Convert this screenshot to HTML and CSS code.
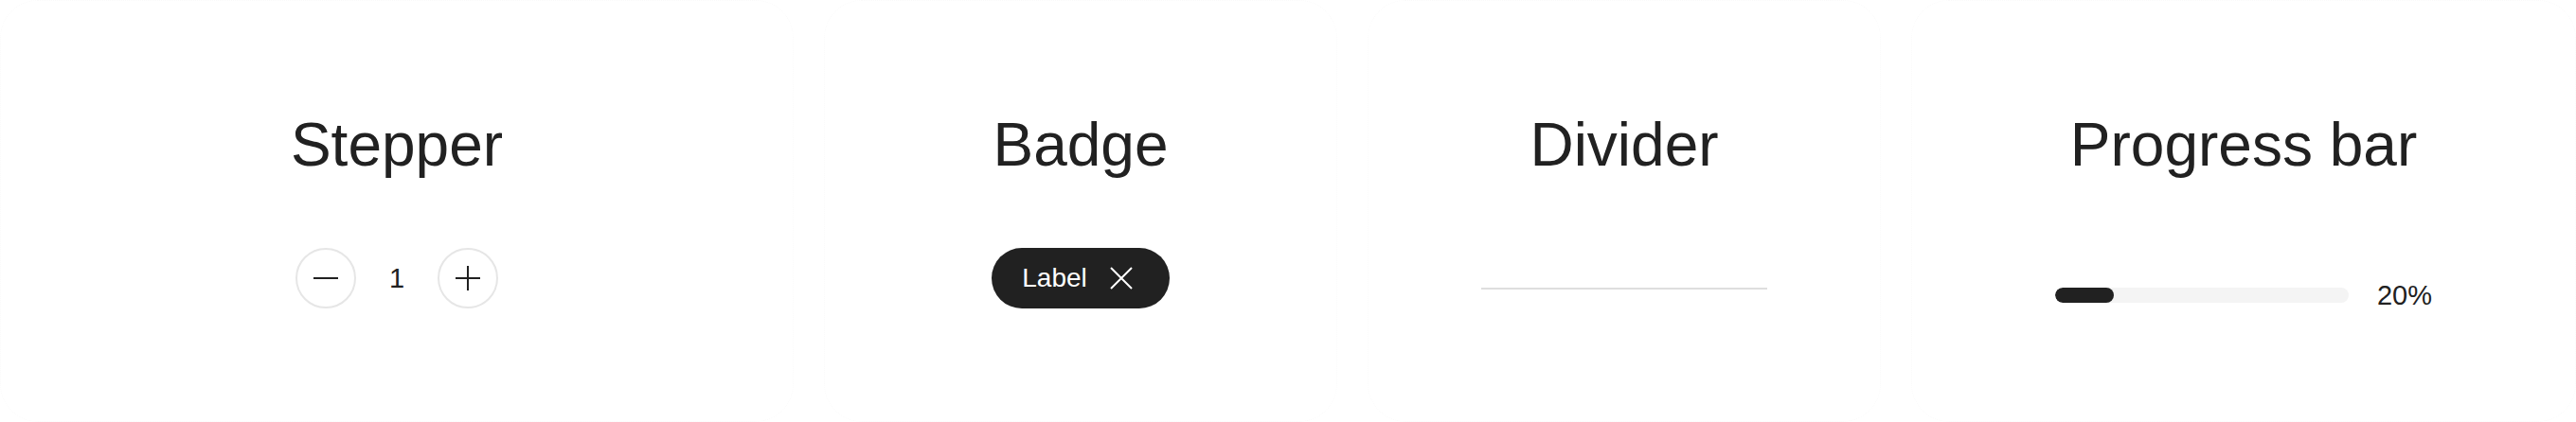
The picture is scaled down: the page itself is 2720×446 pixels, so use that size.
FILE: index.html
```html
<!DOCTYPE html>
<html lang="en">
<head>
    <meta charset="UTF-8">
    <meta name="viewport" content="width=device-width, initial-scale=1.0">
    <title>Components</title>
    <link rel="stylesheet" href="styles.css">
</head>
<body>
    <main class="board">
        <section class="card card-stepper">
            <h2 class="card-title">Stepper</h2>
            <div class="stepper">
                <button class="stepper-btn" aria-label="Decrease">
                    <svg width="28" height="28" viewBox="0 0 28 28"><path d="M1 14h26" /></svg>
                </button>
                <span class="stepper-value">1</span>
                <button class="stepper-btn" aria-label="Increase">
                    <svg width="28" height="28" viewBox="0 0 28 28"><path d="M14 1v26M1 14h26" /></svg>
                </button>
            </div>
        </section>
        <section class="card card-badge">
            <h2 class="card-title">Badge</h2>
            <span class="badge">
                <span class="badge-label">Label</span>
                <svg class="badge-close" width="24" height="24" viewBox="0 0 24 24"><path d="M1 1L23 23M23 1L1 23" /></svg>
            </span>
        </section>
        <section class="card card-divider">
            <h2 class="card-title">Divider</h2>
            <hr class="divider">
        </section>
        <section class="card card-progress">
            <h2 class="card-title">Progress bar</h2>
            <div class="progress">
                <div class="progress-track">
                    <div class="progress-fill" style="width: 20%"></div>
                </div>
                <span class="progress-value">20%</span>
            </div>
        </section>
    </main>
</body>
</html>
```
FILE: styles.css
```css
body {
    font-family: "Liberation Sans", Arial, sans-serif;
    margin: 0;
    padding: 0;
    background-color: #ffffff;
    color: #212121;
}
.board {
    display: flex;
    gap: 32px;
    height: 446px;
}
.card {
    box-sizing: border-box;
    height: 446px;
    padding-top: 120px;
    display: flex;
    flex-direction: column;
    align-items: center;
    border: 1px dotted #fafafa;
    border-radius: 40px;
}
.card-stepper {
    width: 838px;
}
.card-badge, .card-divider {
    width: 542px;
}
.card-progress {
    flex: 1;
}
.card-title {
    margin: 0;
    font-size: 64px;
    font-weight: normal;
    line-height: 64px;
}

/* stepper */
.stepper {
    display: flex;
    align-items: center;
    gap: 24px;
    margin-top: 77px;
}
.stepper-btn {
    box-sizing: border-box;
    width: 64px;
    height: 64px;
    padding: 0;
    display: flex;
    align-items: center;
    justify-content: center;
    background-color: #ffffff;
    border: 2px solid #e6e6e6;
    border-radius: 50%;
}
.stepper-btn svg path {
    stroke: #212121;
    stroke-width: 2;
    fill: none;
}
.stepper-value {
    min-width: 38px;
    text-align: center;
    font-size: 29px;
    line-height: 32px;
}

/* badge */
.badge {
    box-sizing: border-box;
    height: 64px;
    margin-top: 77px;
    padding: 0 39px 0 32px;
    display: flex;
    align-items: center;
    gap: 24px;
    background-color: #212121;
    color: #ffffff;
    border-radius: 32px;
    font-size: 28px;
}
.badge-label {
    line-height: 32px;
}
.badge-close path {
    stroke: #ffffff;
    stroke-width: 2;
    fill: none;
}

/* divider */
.divider {
    width: 302px;
    height: 2px;
    margin: 119px 0 0;
    border: none;
    background-color: #dedede;
}

/* progress bar */
.progress {
    display: flex;
    align-items: center;
    gap: 30px;
    margin-top: 111px;
}
.progress-track {
    width: 310px;
    height: 16px;
    background-color: #f4f4f4;
    border-radius: 8px;
    overflow: hidden;
}
.progress-fill {
    height: 100%;
    background-color: #212121;
    border-radius: 8px;
}
.progress-value {
    font-size: 29px;
    line-height: 32px;
}
```
